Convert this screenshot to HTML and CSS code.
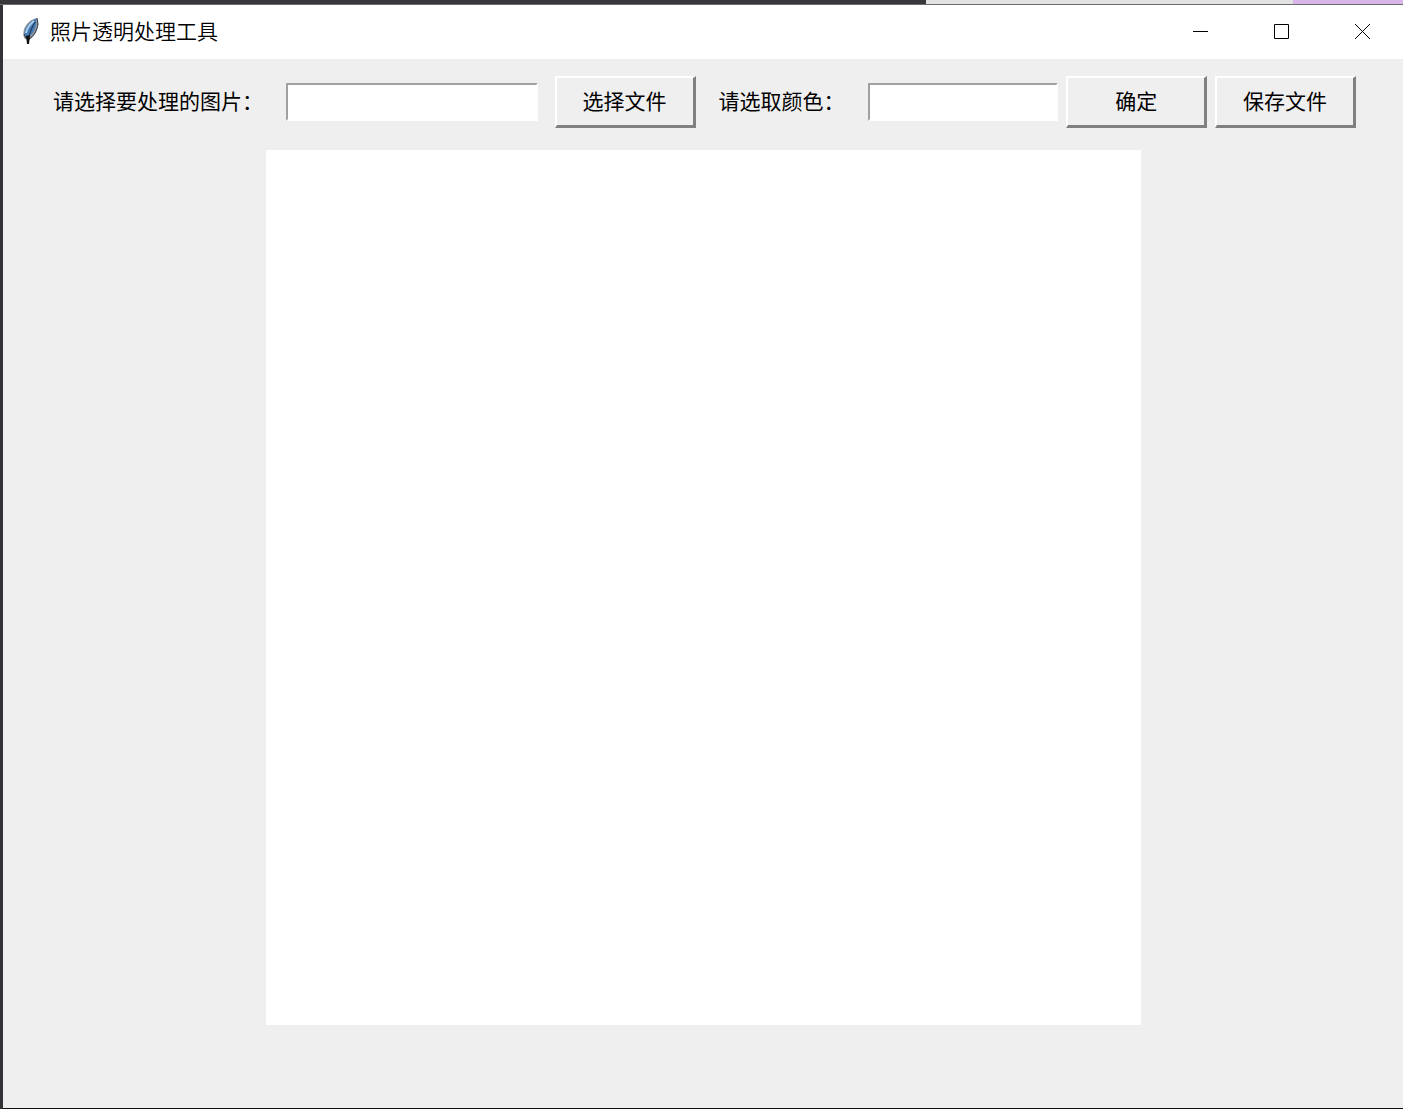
FILE: index.html
```
<!DOCTYPE html>
<html lang="zh-CN">
<head>
  <meta charset="UTF-8">
  <meta name="viewport" content="width=device-width, initial-scale=1.0">
  <title>照片透明处理工具</title>
  <link rel="stylesheet" href="styles.css">
</head>
<body>
  <div class="desktop-strip">
    <span class="strip-dark"></span>
    <span class="strip-light"></span>
    <span class="strip-purple"></span>
  </div>
  <div class="window">
    <header class="titlebar">
      <svg class="app-icon" width="18" height="28" viewBox="0 0 18 28" aria-hidden="true">
        <path d="M15 1 C9 2 4 7 2 12 C1 16 1 20 3 22 L7 23 C12 20 15 14 16 7 Z" fill="#8f979f"/>
        <path d="M14 2 C10 3 5 8 3 13 C2 17 3 20 5 21 C10 18 13 13 14 7 Z" fill="#4379b5"/>
        <path d="M12 4 C8 7 5 11 4 16" fill="none" stroke="#a9cdec" stroke-width="2"/>
        <path d="M15 1 L16 7 C15 14 12 19 7 22 L4 21 L2 17" fill="none" stroke="#263442" stroke-width="1"/>
        <path d="M13 5 C9 12 7 17 6 27" fill="none" stroke="#1c2b3c" stroke-width="1"/>
        <path d="M4 19 L8 18 L7 27 L5 27 Z" fill="#111"/>
      </svg>
      <h1>照片透明处理工具</h1>
      <div class="window-controls">
        <button type="button" aria-label="最小化">
          <svg width="15" height="15" viewBox="0 0 15 15"><path d="M0 7.5 H15"/></svg>
        </button>
        <button type="button" aria-label="最大化">
          <svg width="15" height="15" viewBox="0 0 15 15"><path d="M0.5 0.5 H14.5 V14.5 H0.5 Z"/></svg>
        </button>
        <button type="button" aria-label="关闭">
          <svg width="15" height="15" viewBox="0 0 15 15"><path d="M0 0 L15 15 M15 0 L0 15"/></svg>
        </button>
      </div>
    </header>
    <form class="toolbar" id="toolForm">
      <label for="filePath">请选择要处理的图片：</label>
      <input type="text" class="file-path" id="filePath" name="filePath">
      <button type="button" class="choose-file">选择文件</button>
      <label for="color">请选取颜色：</label>
      <input type="text" class="color" id="color" name="color">
      <button type="submit">确定</button>
      <button type="button">保存文件</button>
    </form>
    <canvas class="preview" id="preview" width="875" height="875"></canvas>
  </div>

  <script>
    document.getElementById("toolForm").addEventListener("submit", function (e) {
      e.preventDefault();
    });
  </script>
</body>
</html>
```

FILE: styles.css
```
* {
    box-sizing: border-box;
}

body {
    display: flex;
    flex-direction: column;
    min-height: 100vh;
    margin: 0;
    background-color: #323337;
    color: #000;
    font-family: "Noto Sans CJK SC", sans-serif;
    font-size: 21px;
    line-height: 30px;
}

.desktop-strip {
    display: flex;
    height: 5px;
    border-bottom: 1px solid #6d6b70;
}

.strip-dark {
    flex: 926;
    background-color: #36383b;
}

.strip-light {
    flex: 367;
    background-color: #e2e2e2;
}

.strip-purple {
    flex: 110;
    background-color: #d7b5e9;
}

.window {
    flex: 1;
    margin-left: 3px;
    border-bottom: 1px solid #111;
    background-color: #efefef;
}

.titlebar {
    display: flex;
    align-items: center;
    height: 54px;
    padding-left: 19px;
    padding-bottom: 2px;
    background-color: #fff;
}

.titlebar h1 {
    margin: 0 0 0 10px;
    padding-bottom: 2px;
    font-size: 21px;
    font-weight: 350;
}

.window-controls {
    display: flex;
    align-self: stretch;
    margin-left: auto;
}

.window-controls button {
    display: flex;
    align-items: center;
    justify-content: center;
    width: 81px;
    padding: 0;
    border: none;
    background: none;
}

.window-controls button:hover {
    background-color: #e5e5e5;
}

.window-controls svg {
    fill: none;
    stroke: #000;
    stroke-width: 1;
}

.toolbar {
    display: flex;
    align-items: center;
    gap: 8px;
    padding: 17px 47px 22px 50px;
}

.toolbar label {
    margin-right: 15px;
    padding-bottom: 4px;
    white-space: nowrap;
}

.toolbar input {
    min-width: 0;
    height: 38px;
    padding: 2px 4px;
    border: 2px solid #fff;
    border-top-color: #a0a0a0;
    border-left-color: #a0a0a0;
    background-color: #fff;
    font: inherit;
}

.toolbar .file-path {
    flex: 1 1 252px;
    margin-right: 9px;
}

.toolbar .color {
    flex: 1 1 191px;
}

.toolbar button {
    width: 141px;
    height: 52px;
    padding: 0 0 3px;
    border: 3px solid #808080;
    border-top: 2px solid #fff;
    border-left: 2px solid #fff;
    background-color: #efefef;
    color: #000;
    font: inherit;
}

.toolbar .choose-file {
    margin-right: 15px;
}

.preview {
    display: block;
    width: 62.5%;
    margin: 0 auto;
    background-color: #fff;
}
```
